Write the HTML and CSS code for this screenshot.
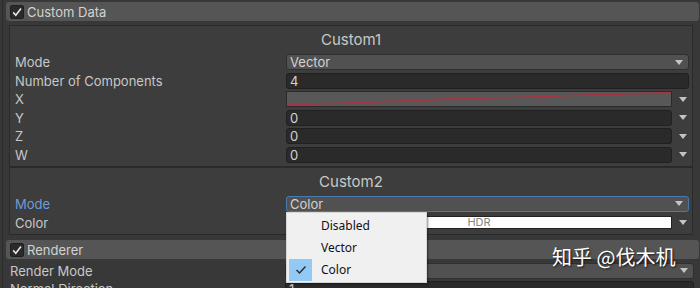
FILE: index.html
```html
<!DOCTYPE html>
<html lang="en">
<head>
  <meta charset="UTF-8">
  <meta name="viewport" content="width=device-width, initial-scale=1.0">
  <title>Custom Data</title>
  <link rel="stylesheet" href="styles.css">
</head>
<body>
  <div class="inspector">
    <!-- Custom Data module -->
    <div class="foldout">
      <span class="toggle"><svg width="10" height="10" viewBox="0 0 10 10"><polyline points="1.2,5.4 3.8,8.2 9,1.4" fill="none" stroke="#e6e6e6" stroke-width="1.6"/></svg></span>
      <span class="foldout__title">Custom Data</span>
    </div>

    <div class="box">
      <div class="box__title">Custom1</div>
      <div class="fields">
        <div class="prop">
          <span class="prop__label">Mode</span>
          <div class="prop__control"><div class="dropdown">Vector<i class="arrow"></i></div></div>
        </div>
        <div class="prop">
          <span class="prop__label">Number of Components</span>
          <div class="prop__control"><div class="field">4</div></div>
        </div>
        <div class="prop">
          <span class="prop__label">X</span>
          <div class="prop__control">
            <div class="curve">
              <svg viewBox="0 0 384 14" preserveAspectRatio="none"><polyline points="0,13 51,11.2 131,8.4 171,6.6 251,4.8 291,3.2 384,0.6" fill="none" stroke="#a53641" stroke-width="1.6"/></svg>
            </div>
            <span class="picker"><i class="arrow"></i></span>
          </div>
        </div>
        <div class="prop">
          <span class="prop__label">Y</span>
          <div class="prop__control"><div class="field">0</div><span class="picker"><i class="arrow"></i></span></div>
        </div>
        <div class="prop">
          <span class="prop__label">Z</span>
          <div class="prop__control"><div class="field">0</div><span class="picker"><i class="arrow"></i></span></div>
        </div>
        <div class="prop">
          <span class="prop__label">W</span>
          <div class="prop__control"><div class="field">0</div><span class="picker"><i class="arrow"></i></span></div>
        </div>
      </div>
    </div>

    <div class="box box--next">
      <div class="box__title">Custom2</div>
      <div class="fields">
        <div class="prop prop--focus">
          <span class="prop__label">Mode</span>
          <div class="prop__control"><div class="dropdown">Color<i class="arrow"></i></div></div>
        </div>
        <div class="prop">
          <span class="prop__label">Color</span>
          <div class="prop__control"><div class="swatch">HDR</div><span class="picker"><i class="arrow"></i></span></div>
        </div>
      </div>
    </div>

    <!-- Renderer module -->
    <div class="foldout foldout--next">
      <span class="toggle"><svg width="10" height="10" viewBox="0 0 10 10"><polyline points="1.2,5.4 3.8,8.2 9,1.4" fill="none" stroke="#e6e6e6" stroke-width="1.6"/></svg></span>
      <span class="foldout__title">Renderer</span>
    </div>
    <div class="fields fields--root">
      <div class="prop prop--root">
        <span class="prop__label">Render Mode</span>
        <div class="prop__control"><div class="dropdown dropdown--end"><i class="arrow"></i></div></div>
      </div>
      <div class="prop prop--root">
        <span class="prop__label">Normal Direction</span>
        <div class="prop__control"><div class="field">1</div></div>
      </div>
    </div>

    <!-- Open dropdown menu -->
    <ul class="menu">
      <li class="menu__item"><span class="menu__check"></span>Disabled</li>
      <li class="menu__item"><span class="menu__check"></span>Vector</li>
      <li class="menu__item"><span class="menu__check menu__check--on"><svg width="12" height="10" viewBox="0 0 12 10"><polyline points="1.5,5 4.5,8 10.5,1.5" fill="none" stroke="#2a2a2a" stroke-width="1.4"/></svg></span>Color</li>
    </ul>

    <div class="watermark">知乎 @伐木机</div>
  </div>
</body>
</html>
```

FILE: styles.css
```css
* {
  margin: 0;
  padding: 0;
  box-sizing: border-box;
}

body {
  width: 700px;
  height: 288px;
  overflow: hidden;
  padding-left: 2px;
  background-color: #383838;
  font-family: Inter, "Noto Sans", sans-serif;
  font-size: 13px;
  color: #c8c8c8;
}

.inspector {
  position: relative;
  height: 100%;
  padding-top: 2px;
  border-left: 1px solid #2b2b2b;
}

/* Module headers */
.foldout {
  display: flex;
  align-items: center;
  gap: 3px;
  height: 19px;
  margin: 0 1px 0 3px;
  padding-left: 4px;
  background-color: #555555;
  border-radius: 3px;
}

.foldout--next {
  margin-top: 5.5px;
}

.toggle {
  display: flex;
  align-items: center;
  justify-content: center;
  width: 14px;
  height: 14px;
  background-color: #2a2a2a;
  border: 1px solid #1f1f1f;
  border-radius: 2px;
}

.foldout__title {
  color: #d2d2d2;
}

/* Custom1 / Custom2 boxes */
.box {
  margin: 4px 7px 0 6px;
  padding-bottom: 2px;
  background-color: #3d3d3d;
  border: 1px solid #2a2a2a;
}

.box--next {
  margin-top: 0;
}

.box__title {
  height: 27px;
  line-height: 27px;
  text-align: center;
  font-size: 15px;
}

.fields {
  display: flex;
  flex-direction: column;
  gap: 0.6px;
}

.fields--root {
  margin-top: 2.5px;
}

.prop {
  display: flex;
  align-items: center;
  height: 18px;
  padding: 0 3px 0 5px;
}

.prop__label {
  flex: 0 0 271px;
  white-space: nowrap;
}

.prop--root {
  padding: 0 6px 0 7px;
}

.prop--root .prop__label {
  flex-basis: 275px;
}

.prop__control {
  flex: 1;
  display: flex;
  align-items: center;
}

.prop--focus .prop__label {
  color: #6f9bd8;
}

.prop--focus .dropdown {
  border-color: #4a79ae;
}

/* Controls */
.dropdown {
  flex: 1;
  display: flex;
  align-items: center;
  justify-content: space-between;
  height: 16px;
  padding: 0 5px 0 3px;
  line-height: 14px;
  color: #d2d2d2;
  background-color: #515151;
  border: 1px solid #2f2f2f;
  border-radius: 3px;
}

.dropdown--end {
  justify-content: flex-end;
}

.field {
  flex: 1;
  height: 16px;
  padding-left: 3px;
  line-height: 14px;
  color: #d2d2d2;
  background-color: #2a2a2a;
  border: 1px solid #202020;
  border-radius: 3px;
}

.curve {
  flex: 1;
  height: 16px;
  background-color: #585858;
  border: 1px solid #2a2a2a;
}

.curve svg {
  display: block;
  width: 100%;
  height: 100%;
}

.swatch {
  flex: 1;
  height: 13px;
  font-size: 11px;
  line-height: 11px;
  text-align: center;
  color: #858585;
  background-color: #ffffff;
  border: 1px solid #222;
}

.picker {
  display: flex;
  justify-content: flex-end;
  width: 17px;
  padding-right: 2px;
}

.arrow {
  width: 0;
  height: 0;
  border-left: 4.5px solid transparent;
  border-right: 4.5px solid transparent;
  border-top: 5px solid #c4c4c4;
}

/* Popup menu */
.menu {
  position: absolute;
  left: 283px;
  top: 212px;
  width: 141px;
  height: 71px;
  padding-top: 1px;
  list-style: none;
  background-color: #f0f0f0;
  border: 1px solid #d6d6d6;
  box-shadow: 1px 1px 2px rgba(0, 0, 0, 0.45);
  font-family: "Noto Sans", sans-serif;
  font-size: 12px;
  color: #111;
}

.menu__item {
  display: flex;
  align-items: center;
  gap: 9px;
  height: 22px;
  padding-left: 2px;
}

.menu__check {
  display: flex;
  align-items: center;
  justify-content: center;
  width: 23px;
  height: 22px;
}

.menu__check--on {
  margin-top: 2px;
  background-color: #92c9f5;
}

.watermark {
  position: absolute;
  left: 549px;
  top: 245px;
  font-family: "Noto Sans CJK SC", sans-serif;
  font-size: 20px;
  line-height: 24px;
  color: #ffffff;
  text-shadow: 1px 1px 2px rgba(0, 0, 0, 0.7);
}
```
